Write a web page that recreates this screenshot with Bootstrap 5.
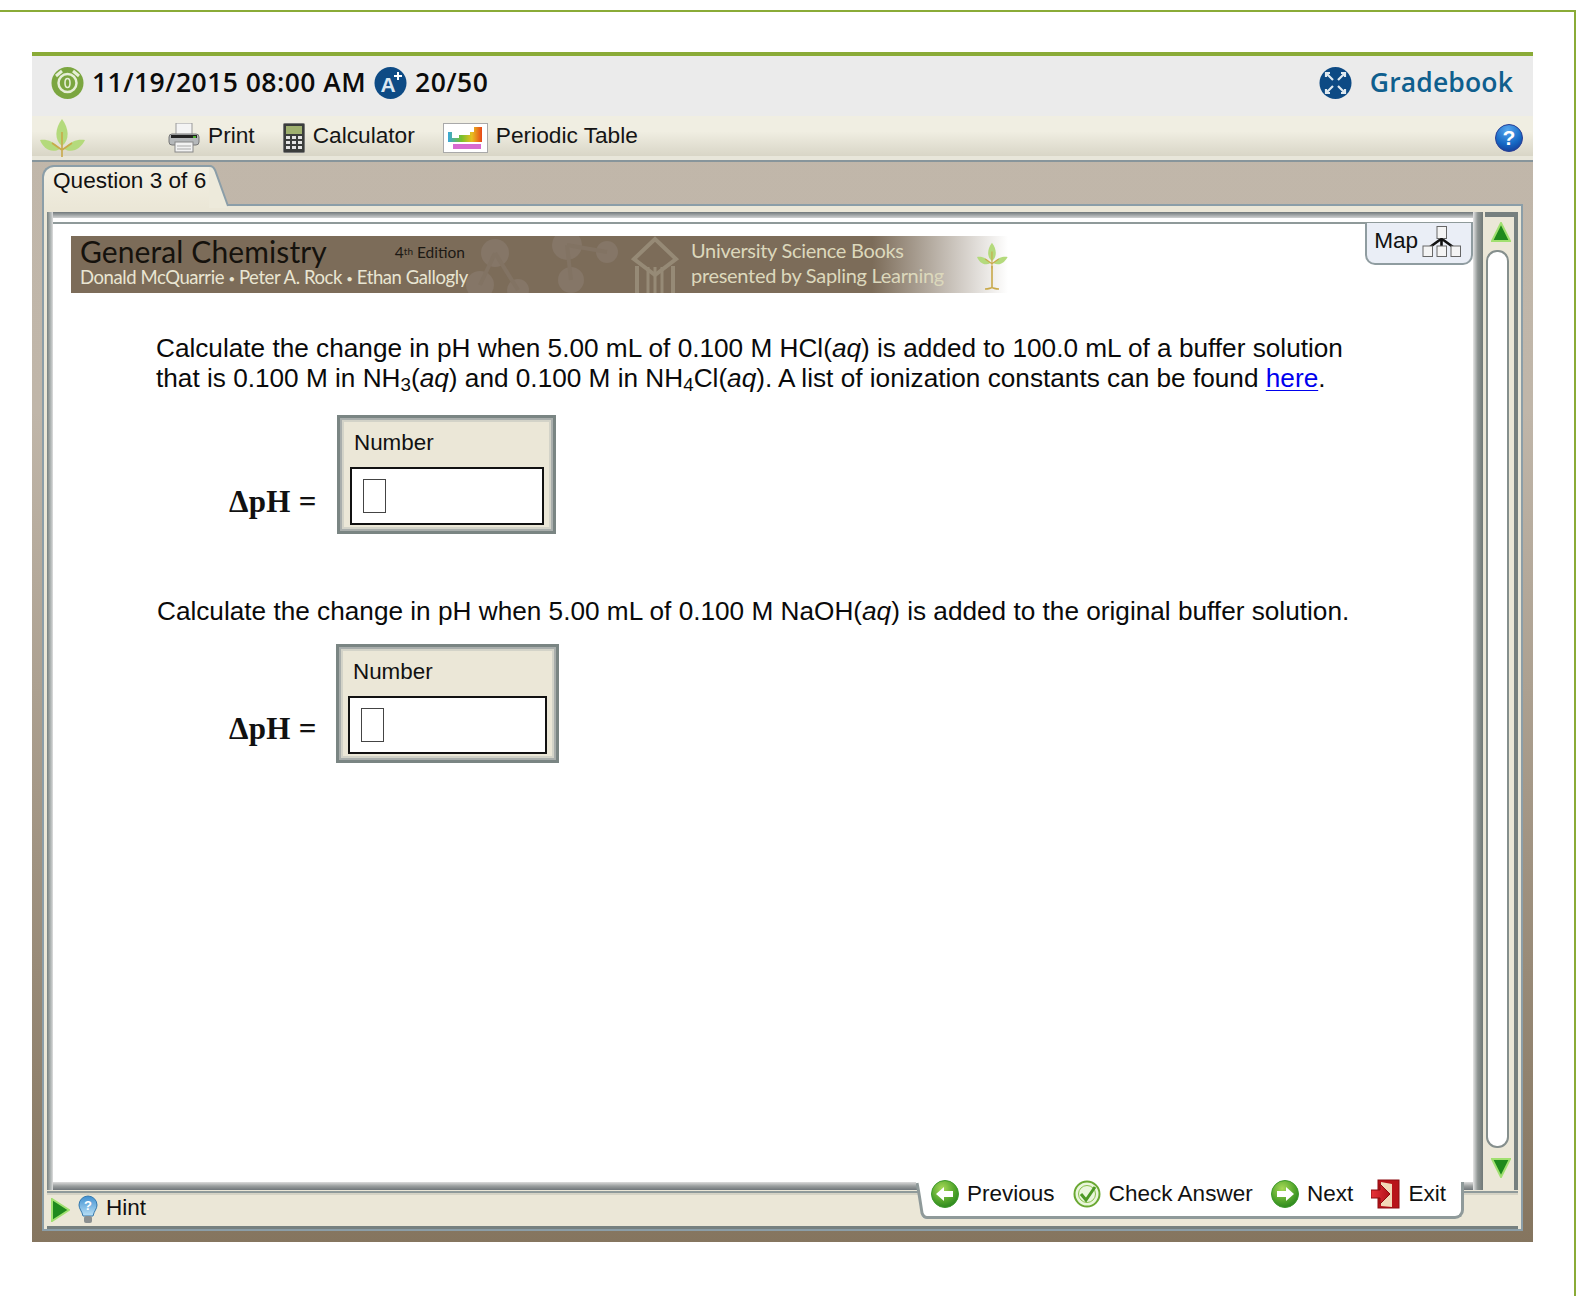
<!DOCTYPE html>
<html lang="en"><head><meta charset="utf-8"><title>Question 3 of 6</title>
<link href="https://cdn.jsdelivr.net/npm/bootstrap@5.3.0/dist/css/bootstrap.min.css" rel="stylesheet">
<style>
html,body{margin:0;background:#fff}
body{font-family:"Liberation Sans",Arial,sans-serif;color:#111;height:1296px;overflow:hidden}
.page-frame{margin-top:10px;height:1286px;border-top:2px solid #8aab37;border-right:2px solid #8aab37;padding:40px 0 0 32px}
.app-shell{width:1501px;height:1190px;border-top:4px solid #8aab37;background:linear-gradient(#c1b7aa 0,#c0b6a9 30%,#85755f 100%)}
.head-bar{height:60px;background:#ebebeb;padding:0 20px 6px 19px;font-family:"Open Sans",sans-serif;font-weight:600;font-size:26.5px;letter-spacing:.45px;color:#0b0b0b}
.grade-link{color:#0f5f8e;text-decoration:none;font-weight:600;letter-spacing:.15px;margin-left:18px}
.tool-bar{height:46px;background:linear-gradient(#f0eee2 0,#f0eee2 35%,#d8d5c6 92%,#e8e6da 92%);border-bottom:2px solid #87959b;padding:0 10px 0 8px;font-size:22.7px}
.tool-item{color:#151515;line-height:1}
.tool-label{margin-bottom:5px}
.print-gap{margin-left:82px}
.tab-strip{height:42px;padding:3px 0 0 10px}
.q-tab{height:43px;position:relative;z-index:2}
.q-tab-body{width:167px;background:linear-gradient(#f3f0e3,#ebe7d7);border:2px solid #8b9ea8;border-width:2px 0 0 2px;border-top-left-radius:12px;padding:0 0 0 9px;font-size:22.6px;line-height:28px}
.q-panel{margin:0 10px 0 10px;height:1027px;border:2px solid #8b9ea8;background:#ebe7d7;padding:6px 3px 0 3px}
.stage-row{height:978px}
.band-left{width:6px;background:linear-gradient(90deg,#76807f,#b8bdbc 70%,#dedede)}
.stage-col{width:1424px}
.band-top{height:6px;background:linear-gradient(#70787a,#d0d2d2);flex:none}
.white-gap{height:4px;background:#fff;flex:none}
.rule-line{height:2px;background:#8f9a9a;flex:none}
.stage-body{flex:1;background:#fff;position:relative;padding:12px 0 0 18px;min-height:0}
.band-bottom{height:8px;background:linear-gradient(#dcdcdc,#9b9f9f 50%,#70767a);flex:none}
.band-right{width:12px;background:linear-gradient(90deg,#e6e6e6,#8d9391 40%,#6f7876 85%,#ebe7d7 85%)}
.scroll-col{width:29px;padding:5px 0 0 2px;border-top:5px solid #76807f}
.scroll-track{width:23px;height:898px;background:#fff;border:2px solid #858f8d;border-radius:11px;margin:8px 0 10px -1px}
.band-far{width:4px;background:#76807f}
.map-tab{position:absolute;top:-1px;right:0;width:108px;height:42px;background:#eaeef6;border:2px solid #8f9ca0;border-top:0;border-radius:0 0 10px 10px;font-size:22.6px;padding:3px 0 0 7px;line-height:30px}
.book-banner{width:937px;height:57px;position:relative;background:linear-gradient(90deg,#7c6c59 0,#7c6c59 85.5%,#fff 100%);font-family:Lato,"Open Sans",sans-serif}
.banner-art{position:absolute;inset:0}
.banner-left{position:absolute;left:9px;top:0;width:385px}
.banner-title{font-size:30px;line-height:31px;color:#15120d;letter-spacing:.1px}
.banner-ed{position:absolute;right:0;top:6px;font-size:15.5px;line-height:20px;color:#1c1914}
.banner-ed sup{font-size:10px;top:-.35em}
.banner-auth{font-size:18.5px;line-height:20px;color:#e9e5d2;white-space:nowrap;letter-spacing:-.42px}
.name-dot{font-size:.62em;vertical-align:.1em}
.banner-right{position:absolute;left:620px;top:2px;font-size:20px;line-height:25px;color:#dcd8bc;white-space:nowrap;letter-spacing:-.3px}
.q-text{font-size:26.2px;line-height:30px;color:#0a0a0a;white-space:nowrap}
.q-one{margin:40px 0 0 85px}
.q-two{margin:62px 0 0 86px}
.q-text sub{font-size:18.8px;bottom:-.2em;line-height:0}
.q-text a{color:#0000ee;text-decoration:underline;text-decoration-thickness:1px;text-underline-offset:3px}
.ans-row{align-items:flex-start}
.ans-one{margin:22px 0 0 158px}
.ans-two{margin:18px 0 0 158px}
.delta-label{font-family:"Liberation Serif",serif;font-weight:700;font-size:31px;line-height:36px;width:88px;color:#111;white-space:nowrap;letter-spacing:.3px}
.ans-one .delta-label{margin-top:69px;margin-right:20px}
.ans-two .delta-label{margin-top:67px;margin-right:19px}
.num-box{border:3px solid #7a8583;box-shadow:inset 0 0 0 2px #a9aeac,inset 0 0 0 4px #d3d3c8;background:#ebe7d7;height:119px;font-size:22.4px;color:#111}
.num-a{width:219px;padding:11px 9px 0 14px}
.num-b{width:223px;padding:11px 9px 0 14px}
.num-title{line-height:28px;height:38px}
.num-field{height:58px;background:#fff;border:2px solid #111;padding:10px 0 0 11px}
.num-a .num-field{margin-left:-4px}
.num-b .num-field{margin-left:-5px}
.num-cell{width:23px;height:34px;border:1px solid #444;display:block}
.hint-bar{height:38px;margin-top:1px;border-top:2px solid #8f9a9a;border-bottom:3px solid #76807f;background:#ebe7d7;font-size:22.5px;padding:0 0 0 4px;box-shadow:inset 0 2px 0 #d5d3c5}
.hint-item{height:33px}
.hint-label{margin-bottom:3px}
.nav-tab{position:relative;z-index:2;height:37px;margin:-11px 54px 0 0}
.nav-body{background:#fff;border-bottom:3px solid #8f9a9a;border-right:3px solid #8f9a9a;border-bottom-right-radius:9px;padding:0 15px 11px 0;width:533px;color:#111}
.nav-step{line-height:30px}
.nav-body svg{flex:none}
</style></head>
<body>
<svg width="0" height="0" class="d-block"><defs>
<radialGradient id="gGreen" cx=".4" cy=".3" r=".8"><stop offset="0" stop-color="#a7d957"/><stop offset=".6" stop-color="#4fa32a"/><stop offset="1" stop-color="#1f7d1a"/></radialGradient>
<radialGradient id="gBlue" cx=".45" cy=".2" r=".9"><stop offset="0" stop-color="#58a8ee"/><stop offset=".6" stop-color="#1568c4"/><stop offset="1" stop-color="#17338c"/></radialGradient>
<linearGradient id="gRed" x1="0" x2="1" y1="0" y2="0"><stop offset="0" stop-color="#e8343a"/><stop offset="1" stop-color="#b01018"/></linearGradient>
<linearGradient id="gBulb" x1="0" x2="0" y1="0" y2="1"><stop offset="0" stop-color="#3f8fd0"/><stop offset="1" stop-color="#b9e0f6"/></linearGradient>
<linearGradient id="gChart" x1="0" x2="1" y1="0" y2="0"><stop offset="0" stop-color="#3aa8d8"/><stop offset=".4" stop-color="#78c02c"/><stop offset=".7" stop-color="#e8c020"/><stop offset="1" stop-color="#e84818"/></linearGradient>
<g id="sprout"><path d="M22 28C14 22 15 10 22 1c7 9 8 21 0 27z" fill="#b4da7c"/><path d="M20 31C13 22 5 21 0 22c3 8 11 14 20 9z" fill="#b4da7c"/><path d="M24 31c7-9 15-10 21-9-4 8-12 14-21 9z" fill="#b4da7c"/><path d="M22 14v25M22 32L12 25M22 32l10-7" stroke="#c9a94a" stroke-width="1.6" fill="none"/></g>
</defs></svg>
<div class="page-frame">
<div class="app-shell d-flex flex-column">
  <div class="head-bar d-flex align-items-center justify-content-between">
    <div class="d-flex align-items-center">
      <svg width="33" height="32" viewBox="0 0 33 32" class="me-2"><ellipse cx="16.500" cy="16" rx="16" ry="16" fill="#7ba640"/><circle cx="16.500" cy="16" r="9" fill="none" stroke="#e6eed6" stroke-width="2.500"/><path d="M5 9l6-5M28 9l-6-5" stroke="#e6eed6" stroke-width="3"/><ellipse cx="16.500" cy="16" rx="2.500" ry="4.500" fill="none" stroke="#e6eed6" stroke-width="1.600"/></svg>
      <span>11/19/2015 08:00 AM</span>
      <svg width="33" height="32" viewBox="0 0 33 32" class="ms-2 me-2"><circle cx="16.500" cy="16" r="16" fill="#0e4b85"/><text x="14" y="25" text-anchor="middle" font-family="Liberation Sans" font-size="21" font-weight="700" fill="#dce8f2" letter-spacing="0">A</text><path d="M24 5v8M20 9h8" stroke="#fff" stroke-width="2"/></svg>
      <span>20/50</span>
    </div>
    <div class="d-flex align-items-center">
      <svg width="33" height="32" viewBox="0 0 33 32"><circle cx="16.500" cy="16" r="16" fill="#0d4a84"/><g stroke="#dfe9f0" stroke-width="2.200" fill="none"><path d="M14 13L8 7M11 6H7v4"/><path d="M19 13l6-6M22 6h4v4"/><path d="M14 19l-6 6M11 26H7v-4"/><path d="M19 19l6 6M22 26h4v-4"/></g></svg>
      <a class="grade-link" href="#">Gradebook</a>
    </div>
  </div>
  <div class="tool-bar d-flex align-items-center">
    <svg width="46" height="40" viewBox="0 0 46 40" class="flex-none"><use href="#sprout"/></svg>
    <div class="tool-item print-gap d-flex align-items-center">
      <svg width="32" height="30" viewBox="0 0 32 30" class="me-2"><rect x="8" y="0" width="16" height="12" fill="#f4f4f4" stroke="#999"/><rect x="1" y="11" width="30" height="11" rx="3" fill="#b5b8ba" stroke="#777"/><rect x="3" y="12" width="26" height="3" fill="#222"/><rect x="25" y="13" width="3" height="2" fill="#4caf30"/><rect x="7" y="19" width="18" height="10" fill="#f2f2f2" stroke="#888"/><path d="M9 23h14M9 26h14" stroke="#aaa"/></svg>
      <span class="tool-label">Print</span>
    </div>
    <div class="tool-item d-flex align-items-center ms-4 ps-1">
      <svg width="22" height="30" viewBox="0 0 22 30" class="me-2"><rect x=".5" y=".5" width="21" height="29" rx="1" fill="#3b3d3c" stroke="#777"/><rect x="3" y="3" width="16" height="8" fill="#9fb06f"/><g fill="#e4e4e4"><rect x="3" y="13" width="4" height="3"/><rect x="9" y="13" width="4" height="3"/><rect x="15" y="13" width="4" height="3"/><rect x="3" y="18" width="4" height="3"/><rect x="9" y="18" width="4" height="3"/><rect x="15" y="18" width="4" height="3"/><rect x="3" y="23" width="4" height="3"/><rect x="9" y="23" width="4" height="3"/><rect x="15" y="23" width="4" height="3"/></g></svg>
      <span class="tool-label">Calculator</span>
    </div>
    <div class="tool-item d-flex align-items-center ms-4 ps-1">
      <svg width="45" height="30" viewBox="0 0 45 30" class="me-2"><rect x=".5" y=".5" width="44" height="29" fill="#fff" stroke="#a9a9a9"/><path d="M5 9v10h34V4h-8v5h-4v3H16v3H9V9z" fill="url(#gChart)"/><rect x="10" y="21" width="28" height="5" fill="#d86ad0"/></svg>
      <span class="tool-label">Periodic Table</span>
    </div>
    <svg width="28" height="28" viewBox="0 0 28 28" class="ms-auto"><circle cx="14" cy="14" r="13.500" fill="url(#gBlue)" stroke="#2b3f95"/><text x="14" y="21" text-anchor="middle" font-family="Liberation Sans" font-size="21" font-weight="700" fill="#fff">?</text></svg>
  </div>
  <div class="tab-strip d-flex">
    <div class="q-tab d-flex">
      <div class="q-tab-body">Question 3 of 6</div>
      <svg width="20" height="43" viewBox="0 0 20 43"><path d="M0 1h1C4 1 5 3 6 5l13 35v3H0z" fill="#edeadb"/><path d="M0 1h1C4 1 5 3 6 5l13 36" fill="none" stroke="#8b9ea8" stroke-width="2"/></svg>
    </div>
  </div>
  <div class="q-panel d-flex flex-column">
    <div class="stage-row d-flex">
      <div class="band-left"></div>
      <div class="stage-col d-flex flex-column">
        <div class="band-top"></div>
        <div class="white-gap"></div>
        <div class="rule-line"></div>
        <div class="stage-body">
          <div class="book-banner">
            <svg class="banner-art" width="937" height="57" viewBox="0 0 937 57">
              <g fill="#857667"><circle cx="424" cy="17" r="14"/><circle cx="496" cy="9" r="15"/><circle cx="536" cy="16" r="11"/><circle cx="409" cy="49" r="14"/><circle cx="500" cy="44" r="13"/><circle cx="447" cy="54" r="11"/></g>
              <g stroke="#827363" stroke-width="4"><path d="M424 17l-15 32M496 9l4 35M496 9l40 7M424 17l23 37"/></g>
              <g fill="none" stroke="#968a76" stroke-width="4"><path d="M563 23L584 3l21 20-21 16z"/><path d="M566 57V30M602 57V30"/></g>
              <path d="M577 31v26M584 31v26M591 31v26" stroke="#968a76" stroke-width="3"/>
              <g transform="translate(906 6) scale(.68)"><use href="#sprout"/></g>
              <path d="M921 30v22M914 53c3 0 7-1 7-2 0 1 4 2 7 2" stroke="#c9a94a" stroke-width="1.600" fill="none"/>
            </svg>
            <div class="banner-left">
              <div class="banner-title">General Chemistry</div>
              <div class="banner-ed">4<sup>th</sup> Edition</div>
              <div class="banner-auth">Donald McQuarrie <span class="name-dot">•</span> Peter A. Rock <span class="name-dot">•</span> Ethan Gallogly</div>
            </div>
            <div class="banner-right">University Science Books<br>presented by Sapling Learning</div>
          </div>
          <div class="map-tab d-flex">Map
            <svg width="40" height="32" viewBox="0 0 40 32" class="ms-1"><rect x="15" y=".5" width="9.500" height="12" fill="#f4f4f4" stroke="#666"/><path d="M19.500 12v8M19 13L8 21M20 13l11 8" stroke="#111" stroke-width="2.600" fill="none"/><rect x="1" y="20" width="9.500" height="10.500" fill="#f4f4f4" stroke="#666"/><rect x="15" y="20" width="9.500" height="10.500" fill="#f4f4f4" stroke="#666"/><rect x="29" y="20" width="9.500" height="10.500" fill="#f4f4f4" stroke="#666"/></svg>
          </div>
          <p class="q-text q-one mb-0">Calculate the change in pH when 5.00 mL of 0.100 M HCl(<i>aq</i>) is added to 100.0 mL of a buffer solution<br>that is 0.100 M in NH<sub>3</sub>(<i>aq</i>) and 0.100 M in NH<sub>4</sub>Cl(<i>aq</i>). A list of ionization constants can be found <a href="#">here</a>.</p>
          <div class="ans-row ans-one d-flex">
            <div class="delta-label">ΔpH =</div>
            <div class="num-box num-a"><div class="num-title">Number</div><div class="num-field"><span class="num-cell"></span></div></div>
          </div>
          <p class="q-text q-two mb-0">Calculate the change in pH when 5.00 mL of 0.100 M NaOH(<i>aq</i>) is added to the original buffer solution.</p>
          <div class="ans-row ans-two d-flex">
            <div class="delta-label">ΔpH =</div>
            <div class="num-box num-b"><div class="num-title">Number</div><div class="num-field"><span class="num-cell"></span></div></div>
          </div>
        </div>
        <div class="band-bottom"></div>
      </div>
      <div class="band-right"></div>
      <div class="scroll-col d-flex flex-column">
        <svg width="20" height="20" viewBox="0 0 20 20" class="ms-1 flex-none"><path d="M10 1l9 18H1z" fill="#1f8a1d" stroke="#a0e070" stroke-width="2"/></svg>
        <div class="scroll-track flex-none"></div>
        <svg width="20" height="20" viewBox="0 0 20 20" class="ms-1 flex-none"><path d="M1 1h18L10 19z" fill="#1f8a1d" stroke="#a0e070" stroke-width="2"/></svg>
      </div>
      <div class="band-far"></div>
    </div>
    <div class="hint-bar d-flex justify-content-between">
      <div class="hint-item d-flex align-items-center">
        <svg width="19" height="24" viewBox="0 0 19 24" class="me-2"><path d="M1 1l17 11L1 23z" fill="#1f8a1d" stroke="#a0e070" stroke-width="2"/></svg>
        <svg width="20" height="29" viewBox="0 0 20 29" class="me-2"><path d="M10 1a9 9 0 0 0-9 9c0 4 3 6 4 11h10c1-5 4-7 4-11a9 9 0 0 0-9-9z" fill="url(#gBulb)" stroke="#3478ad"/><rect x="6" y="21" width="8" height="7" rx="2" fill="#8a8f90"/><text x="10" y="15" text-anchor="middle" font-family="Liberation Sans" font-size="13" font-weight="700" fill="#fff">?</text></svg>
        <span class="hint-label">Hint</span>
      </div>
      <div class="nav-tab d-flex">
        <svg width="15" height="37" viewBox="0 0 15 37" class="flex-none"><path d="M0 0h15v37h-4C7 37 6 35 5 32 4 25 2 8 0 0z" fill="#fff"/><path d="M1 1c2 9 4 24 5 30 1 3 3 4.500 5 4.500h4" fill="none" stroke="#8f9a9a" stroke-width="3"/></svg>
        <div class="nav-body d-flex align-items-center justify-content-between">
          <div class="nav-step d-flex align-items-center"><svg width="28" height="28" viewBox="0 0 28 28" class="me-2"><circle cx="14" cy="14" r="13.500" fill="url(#gGreen)" stroke="#3e9a2c"/><path d="M5 14l8-7v4h9v6h-9v4z" fill="#fff"/></svg>Previous</div>
          <div class="nav-step d-flex align-items-center"><svg width="28" height="28" viewBox="0 0 28 28" class="me-2"><circle cx="14" cy="14" r="12.500" fill="#eaf6dc" stroke="#6aa832" stroke-width="2"/><circle cx="14" cy="14" r="8.500" fill="none" stroke="#89bf4c"/><path d="M8 14l5 6 9-13" fill="none" stroke="#4d9a26" stroke-width="3"/></svg>Check Answer</div>
          <div class="nav-step d-flex align-items-center"><svg width="28" height="28" viewBox="0 0 28 28" class="me-2"><circle cx="14" cy="14" r="13.500" fill="url(#gGreen)" stroke="#3e9a2c"/><path d="M23 14l-8-7v4H6v6h9v4z" fill="#fff"/></svg>Next</div>
          <div class="nav-step d-flex align-items-center"><svg width="29" height="30" viewBox="0 0 29 30" class="me-2"><rect x="7" y="1" width="21" height="28" fill="#b8141a" stroke="#8c0c10"/><path d="M10 3l11 2v23l-11-1z" fill="#f2d9b8"/><path d="M0 11h9V5l10 10-10 10v-6H0z" fill="url(#gRed)" stroke="#8c0c10"/></svg>Exit</div>
        </div>
      </div>
    </div>
  </div>
</div>
</div>
</body></html>
